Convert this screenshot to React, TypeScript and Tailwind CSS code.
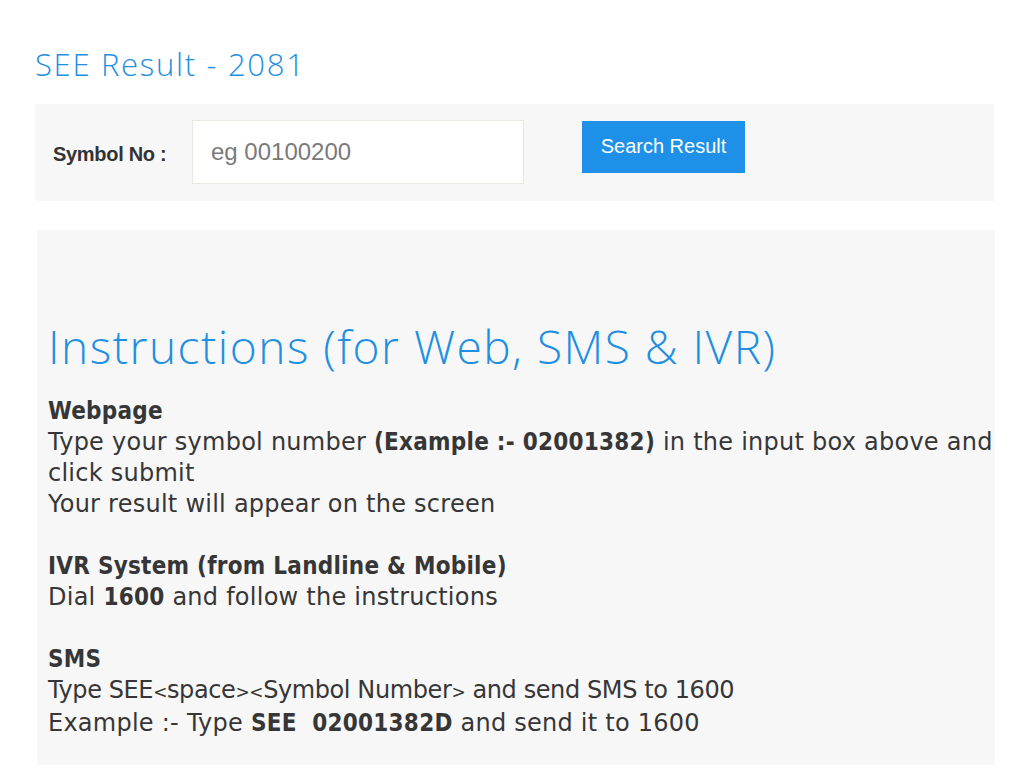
const Lt = () => <span className="text-[17px]">&lt;</span>
const Gt = () => <span className="text-[17px]">&gt;</span>

export default function App() {
  return (
    <div className="min-h-[780px] bg-white px-[35px] pt-[42px] font-['Liberation_Sans',sans-serif]">
      <h1 className="font-['Open_Sans',sans-serif] text-[31px] font-light leading-[44px] tracking-[1.7px] text-[#1e8fe1]">
        SEE Result - 2081
      </h1>

      {/* search bar */}
      <div className="mt-[18px] flex h-[97px] w-[959px] items-start bg-[#f7f7f7] pl-[18px] pt-[16px]">
        <label className="mt-[22px] w-[139px] text-[20px] font-bold leading-[24px] tracking-[-0.3px] text-[#333]">
          Symbol No :
        </label>
        <input
          className="h-[64px] w-[332px] border border-[#ebe8df] bg-white px-[18px] text-[24px] text-[#555] outline-none placeholder:text-[#7a7a7a]"
          placeholder="eg 00100200"
        />
        <button className="ml-[58px] mt-px h-[52px] w-[163px] bg-[#1e90e8] pb-[2px] text-[20px] text-white">
          Search Result
        </button>
      </div>

      {/* instructions */}
      <div className="ml-[2px] mt-[29px] h-[535px] w-[958px] bg-[#f7f7f7] pl-[11px] pr-[2px] pt-[86px] font-['DejaVu_Sans',sans-serif] text-[24px] leading-[31px] tracking-[0.25px] text-[#363636]">
        <h2 className="mb-[20px] font-['Open_Sans',sans-serif] text-[46px] font-light leading-[60px] tracking-[1.5px] text-[#1e8fe1]">
          Instructions (for Web, SMS &amp; IVR)
        </h2>
        <p className="[&_b]:font-['DejaVu_Sans_Condensed','DejaVu_Sans',sans-serif] [&_b]:font-bold">
          <b>Webpage</b>
          <br />
          Type your symbol number <b>(Example :- 02001382)</b> in the input box above and click submit
          <br />
          Your result will appear on the screen
          <br />
          <br />
          <b>IVR System (from Landline &amp; Mobile)</b>
          <br />
          Dial <b>1600</b> and follow the instructions
          <br />
          <br />
          <b>SMS</b>
          <br />
          <span className="tracking-[-0.4px]">
            Type SEE<Lt />space<Gt /><Lt />Symbol Number<Gt /> and send SMS to 1600
          </span>
          <br />
          Example :- Type <b>SEE&nbsp; 02001382D</b> and send it to 1600
        </p>
      </div>
    </div>
  )
}
